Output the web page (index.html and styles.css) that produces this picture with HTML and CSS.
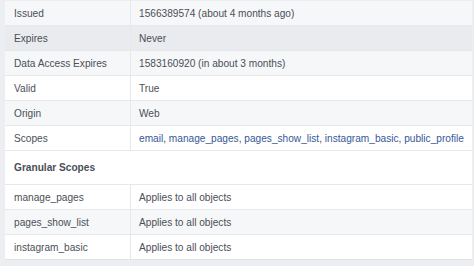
FILE: index.html
```html
<!DOCTYPE html>
<html>
<head>
<meta charset="utf-8">
<link rel="stylesheet" href="styles.css">
</head>
<body>
<div class="wrap">
<table class="info">
  <tbody>
    <tr class="odd"><td class="k">Issued</td><td class="v">1566389574 (about 4 months ago)</td></tr>
    <tr class="hover"><td class="k">Expires</td><td class="v">Never</td></tr>
    <tr class="odd"><td class="k">Data Access Expires</td><td class="v">1583160920 (in about 3 months)</td></tr>
    <tr><td class="k">Valid</td><td class="v">True</td></tr>
    <tr class="odd"><td class="k">Origin</td><td class="v">Web</td></tr>
    <tr><td class="k">Scopes</td><td class="v"><a class="lnk">email</a>, <a class="lnk">manage_pages</a>, <a class="lnk">pages_show_list</a>, <a class="lnk">instagram_basic</a>, <a class="lnk">public_profile</a></td></tr>
    <tr class="head"><td colspan="2">Granular Scopes</td></tr>
    <tr><td class="k">manage_pages</td><td class="v">Applies to all objects</td></tr>
    <tr class="odd"><td class="k">pages_show_list</td><td class="v">Applies to all objects</td></tr>
    <tr><td class="k">instagram_basic</td><td class="v">Applies to all objects</td></tr>
  </tbody>
</table>
</div>
</body>
</html>
```
FILE: styles.css
```css
html, body {
  margin: 0;
  padding: 0;
  background: #eceef1;
}
.wrap {
  padding: 0 2px 0 5px;
}
.info {
  width: 100%;
  border-collapse: collapse;
  background: #fff;
  font-family: "Liberation Sans", Arial, sans-serif;
  font-size: 10.15px;
  color: #4b4f56;
}
.info td {
  height: 24px;
  padding: 0;
  border-top: 1px solid #e6e8eb;
  vertical-align: middle;
  white-space: nowrap;
}
.info tr:first-child td {
  border-top: 1px solid #eceef1;
}
.info .k {
  width: 116px;
  padding-left: 9px;
  border-right: 1px solid #e6e8eb;
}
.info .v {
  padding-left: 8px;
}
.info tr.odd td {
  background: #f6f7f9;
}
.info tr.hover td {
  background: #e9ebee;
}
.info tr.head td {
  height: 33px;
  padding-left: 9px;
  font-weight: bold;
  background: #fff;
}
.info tr:last-child td {
  border-bottom: 1px solid #e1e3e7;
}
.lnk {
  color: #365899;
  text-decoration: none;
}
```
